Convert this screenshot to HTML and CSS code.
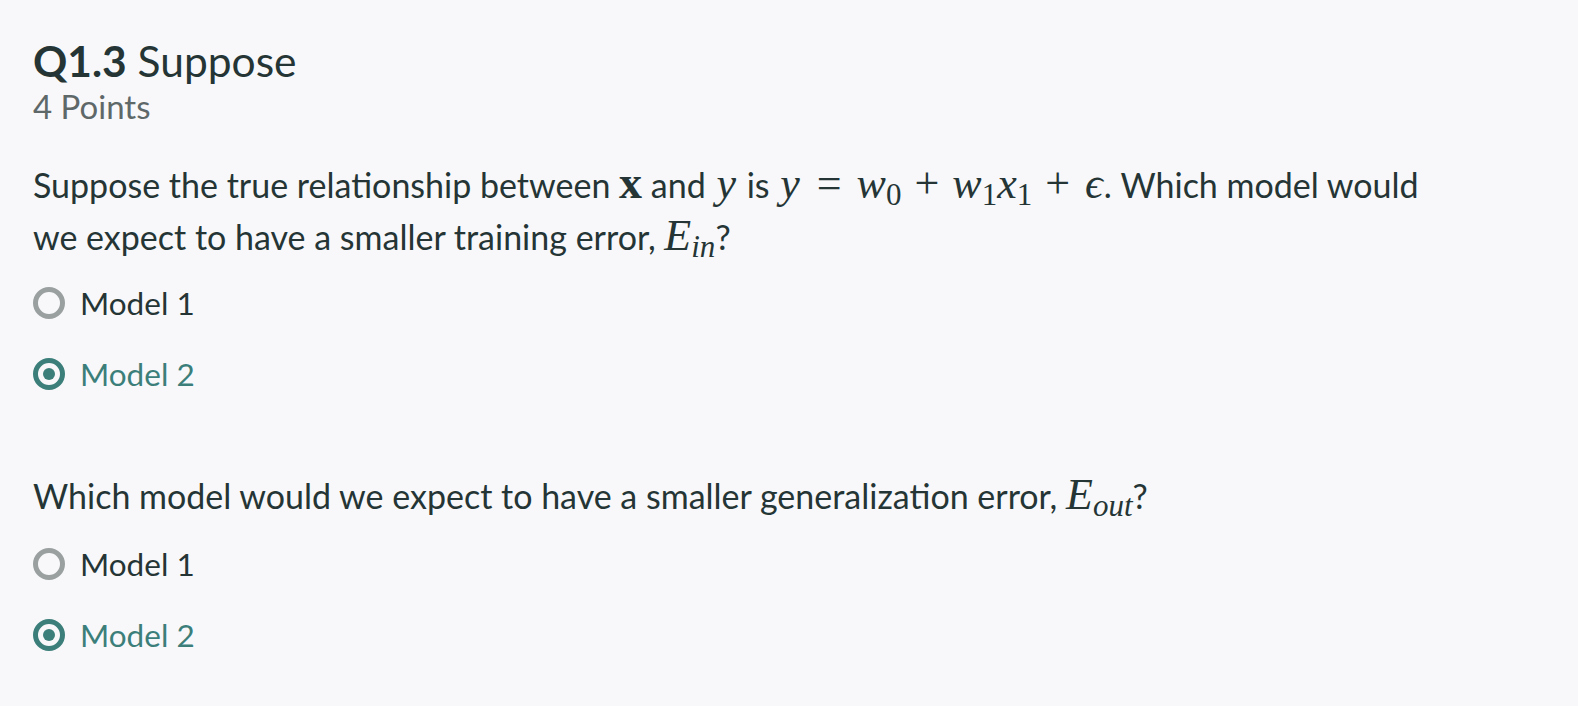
FILE: index.html
```html
<!DOCTYPE html>
<html>
<head>
<meta charset="utf-8">
<link rel="stylesheet" href="styles.css">
</head>
<body>
<div class="question">
  <h2 class="title"><span class="qnum">Q1.3</span> Suppose</h2>
  <div class="points">4 Points</div>

  <p class="prompt">Suppose the true relationship between <span class="math"><span class="mbold">x</span></span> and <span class="math"><span class="mi var-y">y</span></span> is <span class="math"><span class="mi var-y">y</span><span class="rel">=</span><span class="mi">w</span><sub>0</sub><span class="bin">+</span><span class="mi">w</span><sub>1</sub><span class="mi">x</span><sub>1</sub><span class="bin">+</span><span class="mi eps">ϵ</span></span>. Which model would we expect to have a smaller training error, <span class="math"><span class="mi">E</span><sub class="it">in</sub></span>?</p>
  <div class="options">
    <label class="option"><span class="radio"></span><span>Model 1</span></label>
    <label class="option checked"><span class="radio"></span><span>Model 2</span></label>
  </div>

  <p class="prompt second">Which model would we expect to have a smaller generalization error, <span class="math"><span class="mi">E</span><sub class="it">out</sub></span>?</p>
  <div class="options options-second">
    <label class="option"><span class="radio"></span><span>Model 1</span></label>
    <label class="option checked"><span class="radio"></span><span>Model 2</span></label>
  </div>
</div>
</body>
</html>
```
FILE: styles.css
```css
html, body {
  margin: 0;
  padding: 0;
  background: #f8f8fa;
}
body {
  font-family: "Lato", "Open Sans", sans-serif;
  color: #253535;
}
.question {
  padding: 36px 33px 0 33px;
}
.title {
  margin: 0;
  font-size: 42.5px;
  font-weight: 400;
  line-height: 50px;
  color: #253535;
}
.qnum {
  font-weight: 700;
}
.points {
  font-size: 33px;
  line-height: 40px;
  color: #5f6869;
}
.prompt {
  margin: 33px 0 0 0;
  font-size: 34px;
  line-height: 52px;
  max-width: 1410px;
}
.prompt.second {
  margin-top: 76px;
}
.math {
  white-space: nowrap;
  line-height: 1;
}
.mi {
  font-family: "Liberation Serif", "DejaVu Serif", serif;
  font-style: italic;
  font-size: 44px;
}
.var-y {
  padding: 0 2px;
}
.mbold {
  font-family: "Liberation Serif", serif;
  font-weight: 700;
  font-size: 46px;
}
.math sub {
  font-family: "Liberation Serif", serif;
  font-size: 31px;
  vertical-align: -7px;
  line-height: 0;
}
.math sub.it {
  font-style: italic;
}
.rel {
  font-family: "Liberation Serif", serif;
  font-size: 44px;
  padding: 0 15px;
}
.bin {
  font-family: "Liberation Serif", serif;
  font-size: 44px;
  padding: 0 13px;
}
.eps {
  padding: 0 1px 0 2px;
}
.options {
  display: flex;
  flex-direction: column;
  gap: 31px;
  margin-top: 20px;
}
.options-second {
  margin-top: 22px;
}
.option {
  display: flex;
  align-items: center;
  gap: 15px;
  font-size: 31.5px;
  line-height: 40px;
  color: #253535;
}
.radio {
  width: 22px;
  height: 22px;
  border: 5px solid #9aa0a0;
  border-radius: 50%;
  box-sizing: content-box;
  position: relative;
  flex: none;
}
.option.checked {
  color: #3c7f7a;
}
.option.checked .radio {
  border-color: #3c7f7a;
}
.option.checked .radio::after {
  content: "";
  position: absolute;
  left: 50%;
  top: 50%;
  width: 12px;
  height: 12px;
  margin: -6px 0 0 -6px;
  border-radius: 50%;
  background: #3c7f7a;
}
```
